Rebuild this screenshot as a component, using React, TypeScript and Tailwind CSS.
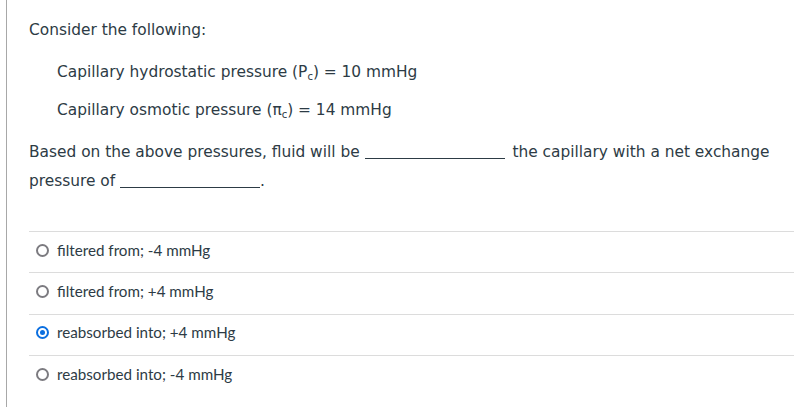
import React from 'react';

const options = [
  { label: 'filtered from; -4 mmHg', checked: false },
  { label: 'filtered from; +4 mmHg', checked: false },
  { label: 'reabsorbed into; +4 mmHg', checked: true },
  { label: 'reabsorbed into; -4 mmHg', checked: false },
];

function Radio({ checked }: { checked: boolean }) {
  if (checked) {
    return (
      <span className="flex h-[13px] w-[13px] shrink-0 items-center justify-center rounded-full border-2 border-[#0b6fe0]">
        <span className="h-[5px] w-[5px] rounded-full bg-[#0b6fe0]" />
      </span>
    );
  }
  return <span className="h-[13px] w-[13px] shrink-0 rounded-full border-2 border-[#7c7b80]" />;
}

function Blank() {
  return <span className="inline-block h-px w-[140px] bg-[#2d3b45] align-[-2px]" />;
}

export default function App() {
  return (
    <div className="min-h-[407px] bg-white pl-[6px]">
      <div className="min-h-[407px] border-l border-[#a8a8a8] pl-[22px] pt-[19px] text-[#2d3b45]">
        <div className="font-['DejaVu_Sans',Verdana,sans-serif] text-[15.4px] leading-[22px]">
          <p>Consider the following:</p>
          <p className="mt-[20px] pl-[28px]">
            Capillary hydrostatic pressure (P<sub className="text-[10px]">c</sub>) = 10 mmHg
          </p>
          <p className="mt-[16px] pl-[28px]">
            Capillary osmotic pressure (π<sub className="text-[10px]">c</sub>) = 14 mmHg
          </p>
          <p className="mt-[16.5px] leading-[29px]">
            Based on the above pressures, fluid will be <Blank />{' '}
            <span className="ml-[3px]">the capillary with a net exchange</span> pressure of <Blank />.
          </p>
        </div>

        <div className="mt-[35.5px] border-t border-[#dcdcdc] font-['Lato',sans-serif] text-[15.2px]">
          {options.map((o) => (
            <div
              key={o.label}
              className="flex h-[41.3px] items-center gap-[8px] border-b border-[#dcdcdc] pb-[4px] pl-[7px] last:border-b-0"
            >
              <Radio checked={o.checked} />
              <span>{o.label}</span>
            </div>
          ))}
        </div>
      </div>
    </div>
  );
}
